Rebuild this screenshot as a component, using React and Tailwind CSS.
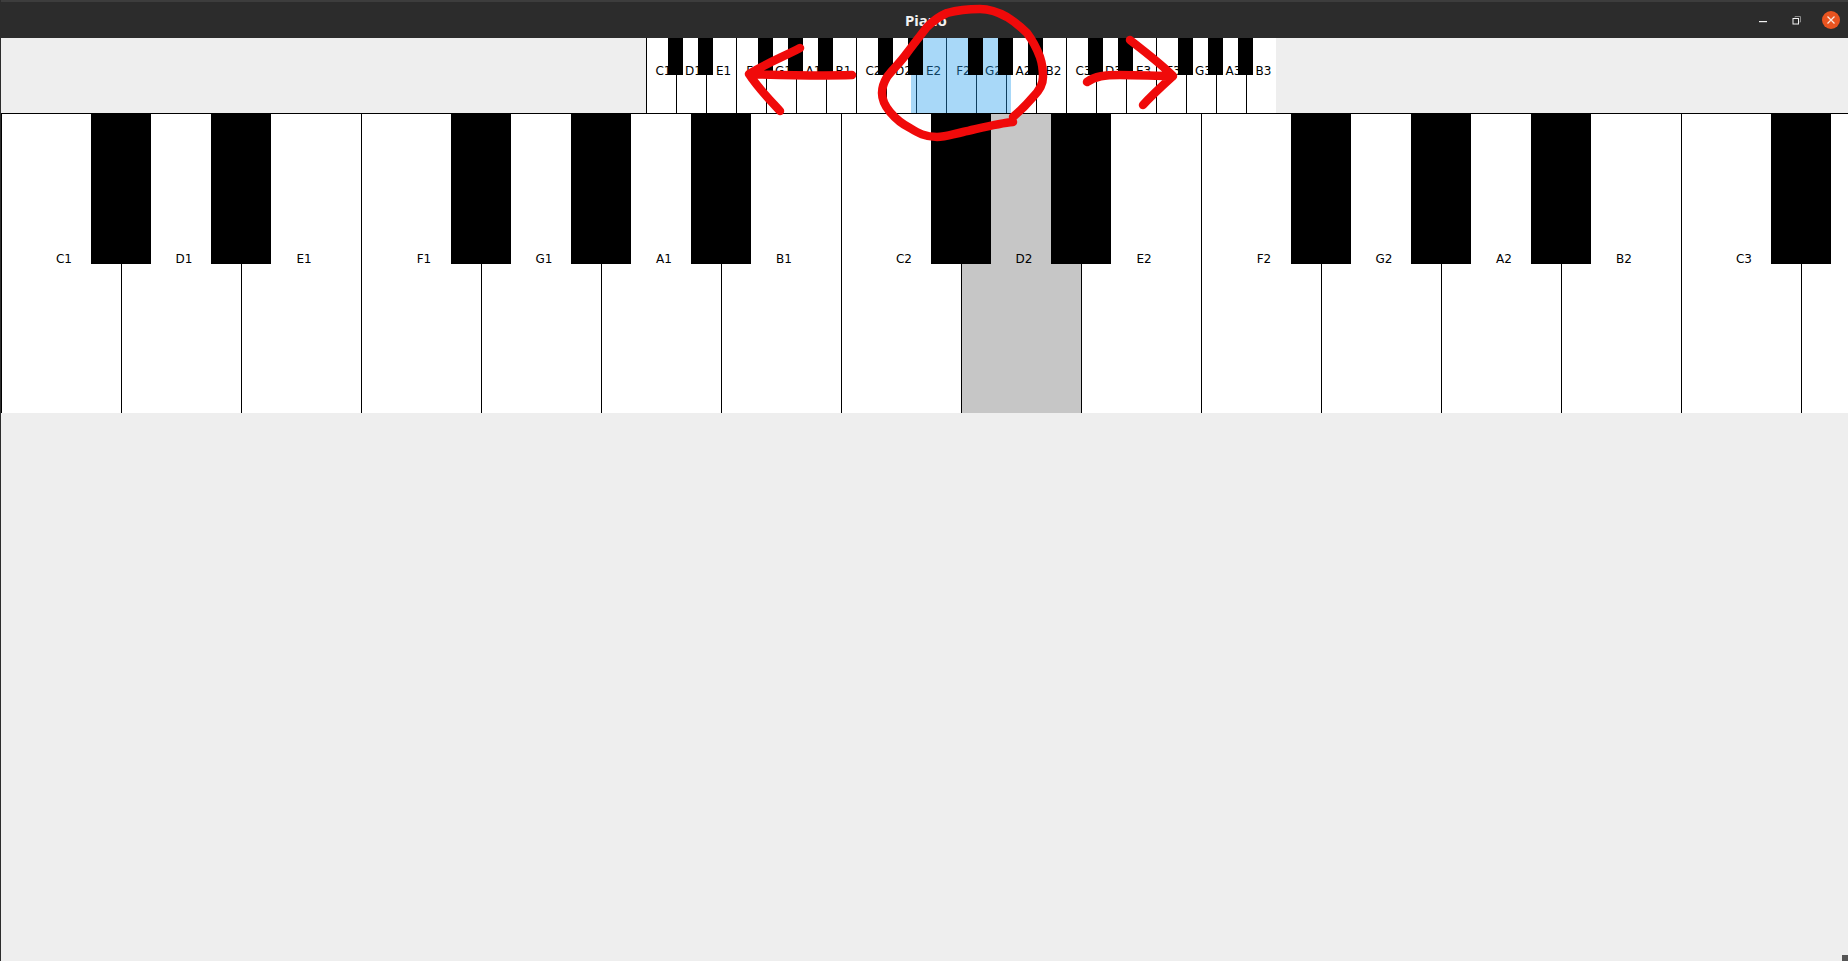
import React from "react";

const NAMES = ["C", "D", "E", "F", "G", "A", "B"];
const FONT = "font-['DejaVu_Sans',sans-serif]";

// every white key, C1 to B3
const keys = [];
for (let octave = 1; octave <= 3; octave++) {
  NAMES.forEach((n) => keys.push({ label: n + octave, sharp: n !== "E" && n !== "B" }));
}

function MiniKey({ label, sharp }) {
  return (
    <div className="relative flex h-full w-[30px] items-center justify-center border-l border-black bg-white pb-[10px] pl-[4px]">
      <span className={`${FONT} text-[12px] leading-none text-black`}>{label}</span>
      {sharp && <div className="absolute top-0 right-[-7px] z-20 h-[37px] w-[15px] bg-black" />}
    </div>
  );
}

function BigKey({ label, sharp, pressed }) {
  return (
    <div
      className={`relative flex h-full w-[120px] shrink-0 items-center justify-center border-l border-black pb-[10px] pl-[5px] ${
        pressed ? "bg-[#c6c6c6]" : "bg-white"
      }`}
    >
      <span className={`${FONT} text-[12px] leading-none text-black`}>{label}</span>
      {sharp && <div className="absolute top-0 right-[-30px] z-20 h-[150px] w-[60px] bg-black" />}
    </div>
  );
}

export default function App() {
  return (
    <div className="relative h-[961px] w-[1848px] overflow-hidden border-l border-[#2c2c2c] bg-[#eeeeee]">
      {/* Title bar */}
      <div className="-ml-px flex h-[38px] w-[1848px] items-center justify-between border-t-2 border-[#3d3d3d] bg-[#2c2c2c]">
        <div className="w-[200px]" />
        <span className="pl-[4px] font-['Noto_Sans',sans-serif] text-[15px] font-bold text-[#f2f2f2]">Piano</span>
        <div className="flex w-[200px] items-center justify-end pr-[8px]">
          <svg width="8" height="8" viewBox="0 0 8 8">
            <rect x="0" y="5" width="8" height="1.2" fill="#f2f2f2" />
          </svg>
          <svg className="ml-[25px]" width="9" height="9" viewBox="0 0 9 9" fill="none">
            <path d="M3 1.5V0.5H8.5V6H7.5" stroke="#8a8a8a" />
            <rect x="1" y="2.5" width="5.5" height="5.5" stroke="#f2f2f2" />
          </svg>
          <div className="ml-[21px] flex h-[18px] w-[18px] items-center justify-center rounded-full bg-[#e95420]">
            <svg width="8" height="8" viewBox="0 0 8 8" fill="none">
              <path d="M0.5 0.5L7.5 7.5M7.5 0.5L0.5 7.5" stroke="#fbe6dd" strokeWidth="1.3" />
            </svg>
          </div>
        </div>
      </div>

      {/* Overview strip */}
      <div className="relative flex h-[75px] pl-[645px]">
        {keys.map((k) => (
          <MiniKey key={k.label} {...k} />
        ))}
        <div className="absolute top-0 left-[910px] z-10 h-full w-[100px] bg-[#259ded]/40" />
      </div>

      {/* Main keyboard, D3 runs off the window so it has no label */}
      <div className="flex h-[300px] border-t border-black">
        {keys.slice(0, 15).map((k) => (
          <BigKey key={k.label} {...k} pressed={k.label === "D2"} />
        ))}
        <div className="h-full flex-1 border-l border-black bg-white" />
      </div>

      {/* Resize grip */}
      <div className="absolute right-0 bottom-0 h-[6px] w-[6px] bg-[#555555]" />

      {/* Red hand-drawn annotations */}
      <svg
        className="pointer-events-none absolute top-0 left-[-1px] z-30"
        width="1848"
        height="961"
        viewBox="0 0 1848 961"
        fill="none"
        stroke="#f00a0a"
        strokeWidth="8.5"
        strokeLinecap="round"
        strokeLinejoin="round"
      >
        <path d="M852 75C820 76 780 75 749 74C765 64 785 56 800 48M749 74C758 88 770 100 780 111" />
        <path d="M1087 82C1095 76 1105 75 1120 75C1140 75 1155 76 1173 76C1160 63 1145 52 1130 40M1173 76C1162 86 1152 95 1143 105" />
        <path d="M1013 122C1000 123 985 127 963 132C950 135 945 137 937 137C925 137 918 133 910 128C902 124 895 118 890 112C885 106 882 100 882 93C882 87 884 82 887 77C892 70 900 63 907 53C913 45 920 36 927 27C933 21 940 16 947 13C958 10 970 9 980 9C990 9 998 12 1007 17C1015 22 1021 27 1027 33C1033 41 1037 49 1040 57C1042 63 1043 70 1043 77C1043 85 1039 91 1033 97C1028 103 1020 111 1013 117" />
      </svg>
    </div>
  );
}
